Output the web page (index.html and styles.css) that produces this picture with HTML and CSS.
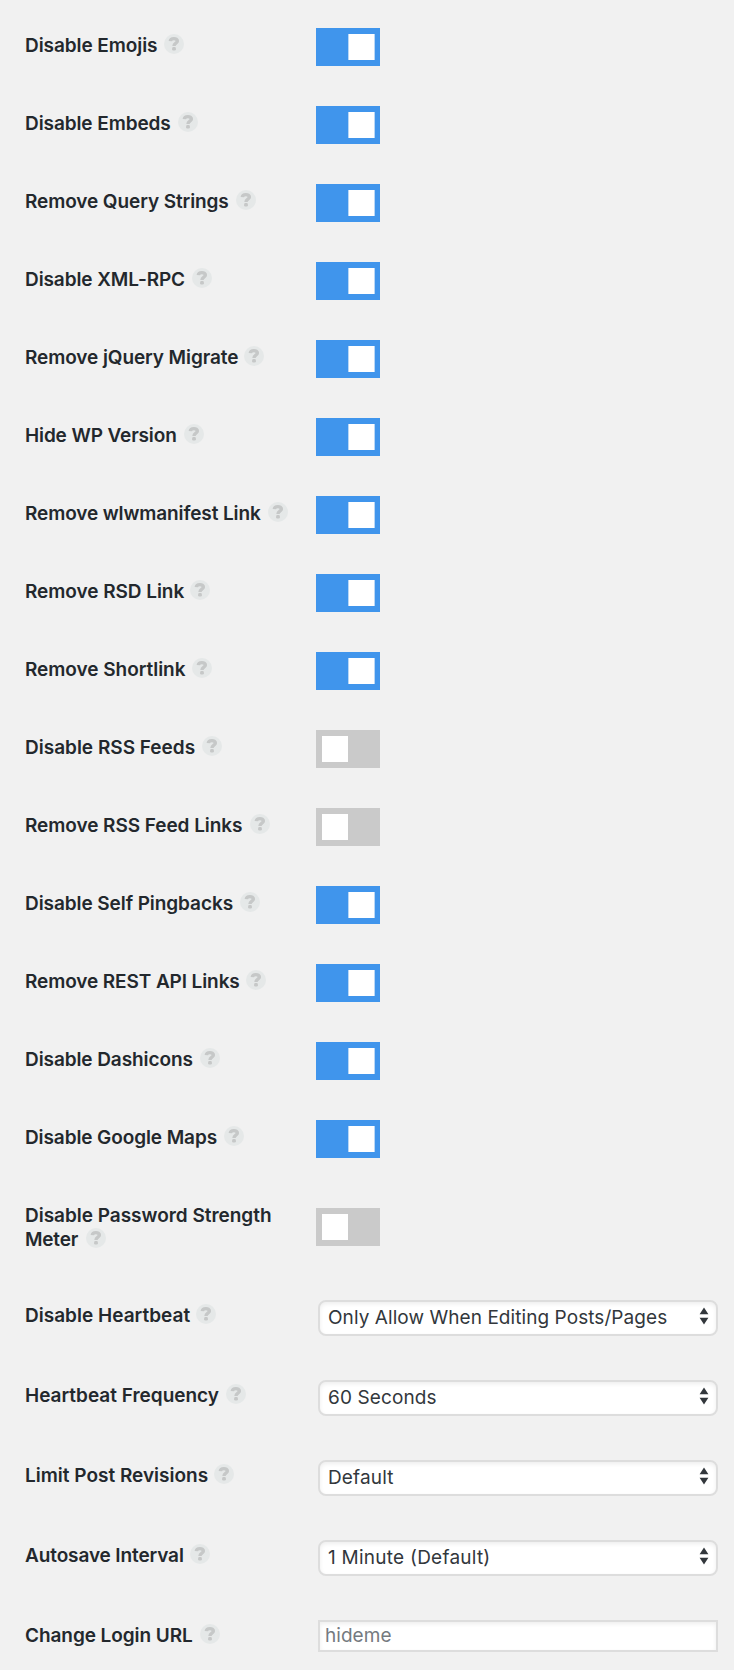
FILE: index.html
```
<!DOCTYPE html>
<html lang="en">
<head>
<meta charset="utf-8">
<title>Settings</title>
<link rel="stylesheet" href="styles.css">
</head>
<body>
<main class="settings" id="settings"></main>
<script src="app.js"></script>
</body>
</html>
```
FILE: styles.css
```
* { box-sizing: border-box; }
body {
  margin: 0;
  background: #f1f1f1;
  color: #23282d;
  font-family: Inter, "Liberation Sans", sans-serif;
  font-size: 19px;
}
.settings { padding-top: 8px; height: 1670px; overflow: hidden; }
.row {
  display: grid;
  grid-template-columns: 291px 1fr;
  height: 78px;
  padding: 0 16px 0 25px;
}
.row.tall { height: 100px; }
.row.field { height: 80px; }
.label {
  padding-top: 26px;
  line-height: 24px;
  font-weight: 600;
  white-space: nowrap;
}
.line { display: flex; height: 24px; }
.text { flex: none; }
.help {
  width: 20px;
  height: 20px;
  margin: 0 0 0 7px;
  flex: none;
}
.help circle { fill: #e5e8e8; }
.help path { fill: none; stroke: #c6c8c8; stroke-width: 3.4; }
.help rect { fill: #c6c8c8; }
.toggle {
  width: 64px;
  height: 38px;
  margin-top: 20px;
  padding: 6px;
  background: #cacaca;
}
.tall .toggle { margin-top: 30px; }
.toggle.on { background: #4095ec; padding-left: 32px; }
.knob { width: 26px; height: 26px; background: #fff; }
.on .knob {
  width: 27px;
  border: solid #b9d7f6;
  border-width: 0 1px;
}
.select, .input {
  display: flex;
  justify-content: space-between;
  width: 400px;
  height: 36px;
  margin: 22px 0 0 2px;
  border: 2px solid #ddd;
  background: #fff;
  box-shadow: inset 0 2px 4px rgba(0, 0, 0, .07);
  color: #32373c;
  line-height: 31px;
  white-space: nowrap;
}
.select { border-radius: 8px; padding: 0 6.6px 0 8px; }
.input { height: 32px; line-height: 27px; padding-left: 5px; color: #757a7f; }
.arrows { width: 10px; height: 18px; margin-top: 5px; fill: #32373c; }
```
FILE: app.js
```
// label, value, width of each label line, width up to the help icon, width of the value
const rows = [
  ["Disable Emojis", true, [132.5], 132],
  ["Disable Embeds", true, [145.8], 146],
  ["Remove Query Strings", true, [203.8], 204],
  ["Disable XML-RPC", true, [159.7], 160],
  ["Remove jQuery Migrate", true, [213.5], 212],
  ["Hide WP Version", true, [151.8], 152],
  ["Remove wlwmanifest Link", true, [235.8], 236],
  ["Remove RSD Link", true, [159.2], 158],
  ["Remove Shortlink", true, [160.5], 160],
  ["Disable RSS Feeds", false, [170.1], 170],
  ["Remove RSS Feed Links", false, [217.5], 218],
  ["Disable Self Pingbacks", true, [208.1], 208],
  ["Remove REST API Links", true, [214.8], 214],
  ["Disable Dashicons", true, [167.9], 168],
  ["Disable Google Maps", true, [192.1], 192],
  ["Disable Password Strength|Meter", false, [246.6, 53.2], 54],
  ["Disable Heartbeat", "Only Allow When Editing Posts/Pages", [165.2], 164, 339.2],
  ["Heartbeat Frequency", "60 Seconds", [194], 194, 108.5],
  ["Limit Post Revisions", "Default", [183.1], 182, 65.5],
  ["Autosave Interval", "1 Minute (Default)", [158.9], 158, 162.3],
  ["Change Login URL", "hideme", [167.7], 168, 66.5]
];

const help = '<svg class="help" viewBox="0 0 20 20"><circle cx="10" cy="10" r="10"/><path d="M6.3 7.2C6.6 3.8 13.4 3.8 13.4 7.1C13.4 9.2 10 9.2 10 12"/><rect x="8.1" y="13.1" width="3.8" height="3.5" rx="1.3"/></svg>';
const arrows = '<svg class="arrows" viewBox="0 0 10 18"><path d="M5 .6L9.4 7.2H.6zM5 17.4L.6 10.8H9.4z"/></svg>';

function span(text, fit, box) {
  return `<span class="text" data-fit="${fit}" data-box="${box || ""}">${text}</span>`;
}

function control(value, width) {
  if (typeof value === "boolean") {
    return `<div class="toggle${value ? " on" : ""}"><div class="knob"></div></div>`;
  }
  if (value === "hideme") return `<div class="input">${span(value, width)}</div>`;
  return `<div class="select">${span(value, width)}${arrows}</div>`;
}

document.getElementById("settings").innerHTML = rows.map(([label, value, widths, box, valueWidth]) => {
  const lines = label.split("|");
  const kind = lines.length > 1 ? " tall" : typeof value === "string" ? " field" : "";
  const text = lines.map((line, i) => {
    const last = i === lines.length - 1;
    return `<div class="line">${span(line, widths[i], last && box)}${last ? help : ""}</div>`;
  }).join("");
  return `<div class="row${kind}"><div class="label">${text}</div>${control(value, valueWidth)}</div>`;
}).join("");

// Track each text run to its width
document.querySelectorAll(".text").forEach((el) => {
  const natural = el.getBoundingClientRect().width;
  const gap = (Number(el.dataset.fit) - natural) / (el.textContent.length - 1);
  el.style.letterSpacing = gap.toFixed(3) + "px";
  if (el.dataset.box) el.style.width = el.dataset.box + "px";
});
```
